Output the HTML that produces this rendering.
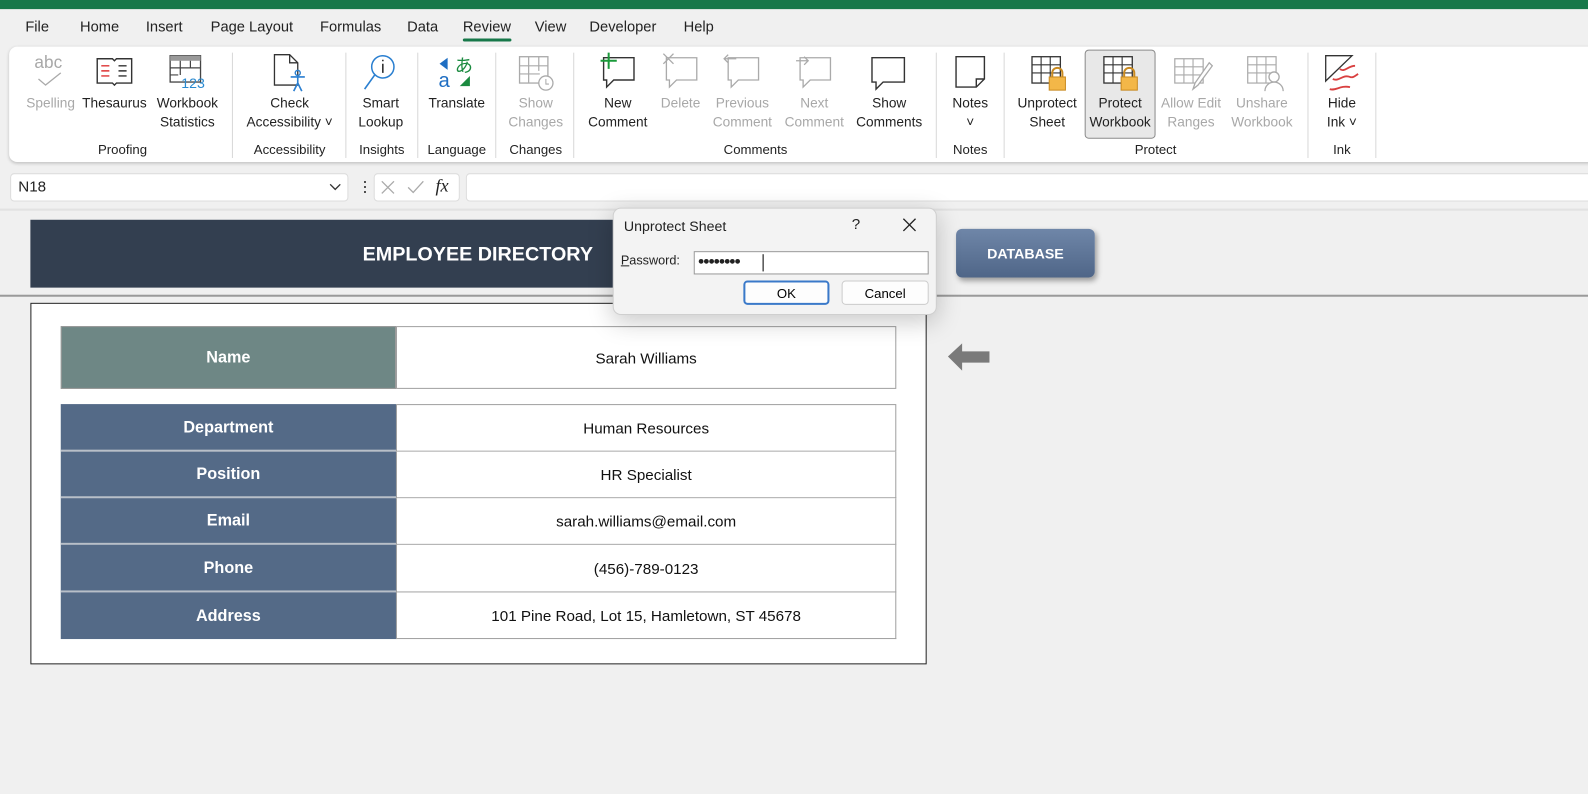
<!DOCTYPE html>
<html><head><meta charset="utf-8"><style>
*{margin:0;padding:0;box-sizing:border-box}
html,body{width:1588px;height:794px;overflow:hidden;background:#f0f0f0;font-family:"Liberation Sans",sans-serif}
#w{position:absolute;left:0;top:0;width:1568px;height:784px;transform:scale(1.01276);transform-origin:0 0;background:#f0f0f0}
.a{position:absolute}
.t{position:absolute;font-size:14.5px;color:#222;white-space:nowrap}
.bl{position:absolute;font-size:13.5px;color:#222;text-align:center;line-height:19px;white-space:nowrap}
.g{color:#a8a8a8}
.gl{position:absolute;top:140px;font-size:13px;color:#222;text-align:center;white-space:nowrap}
.sep{position:absolute;top:52px;width:1px;height:104px;background:#d8d8d8}
svg{position:absolute}
.lab{position:absolute;left:60px;width:331px;color:#fff;font-weight:bold;font-size:16px;display:flex;align-items:center;justify-content:center;background:#546a87;border-bottom:2px solid #b8bfc8;padding-top:2px}
.val{position:absolute;left:391px;width:494px;font-size:15px;color:#111;display:flex;align-items:center;justify-content:center;background:#fff;border:1px solid #a0a0a0;border-top:none;padding-top:2px}
</style></head><body><div id="w">
<div class="a" style="left:0;top:0;width:1568px;height:9px;background:#17784a"></div>
<div class="t" style="left:25px;top:19px">File</div>
<div class="t" style="left:79px;top:19px">Home</div>
<div class="t" style="left:144px;top:19px">Insert</div>
<div class="t" style="left:208px;top:19px">Page Layout</div>
<div class="t" style="left:316px;top:19px">Formulas</div>
<div class="t" style="left:402px;top:19px">Data</div>
<div class="t" style="left:457px;top:19px">Review</div>
<div class="a" style="left:457px;top:38px;width:48px;height:3px;background:#17784a;border-radius:2px"></div>
<div class="t" style="left:528px;top:19px">View</div>
<div class="t" style="left:582px;top:19px">Developer</div>
<div class="t" style="left:675px;top:19px">Help</div>

<div class="a" style="left:9px;top:46px;width:1570px;height:114px;background:#fff;border-radius:8px 0 0 8px;box-shadow:0 1px 3px rgba(0,0,0,.2)"></div>
<div class="sep" style="left:229px"></div><div class="sep" style="left:341px"></div><div class="sep" style="left:412px"></div><div class="sep" style="left:489px"></div><div class="sep" style="left:566px"></div><div class="sep" style="left:924px"></div><div class="sep" style="left:991px"></div><div class="sep" style="left:1291px"></div><div class="sep" style="left:1358px"></div>

<div class="t g" style="left:34px;top:52px;font-size:17px">abc</div>
<svg style="left:36px;top:70px" width="26" height="16"><path d="M2 8 L9 14 L24 2" fill="none" stroke="#aaa" stroke-width="1.3"/></svg>
<svg style="left:94px;top:55px" width="38" height="32"><path d="M2 3h15l2 2 2-2h15v24H21l-2 2-2-2H2z" fill="none" stroke="#333" stroke-width="1.4"/><path d="M6 10h8M6 15h8M6 20h8" stroke="#d33" stroke-width="1.4"/><path d="M23 10h8M23 15h8M23 20h8" stroke="#333" stroke-width="1.4"/></svg>
<svg style="left:167px;top:54px" width="36" height="34"><rect x="1" y="1" width="30" height="26" fill="none" stroke="#444" stroke-width="1.3"/><rect x="1" y="1" width="30" height="5" fill="#999"/><path d="M1 13h30M1 20h8M11 6v14M21 6v7" stroke="#444" stroke-width="1.2"/><text x="12" y="33" font-size="14" fill="#2a8ad0" font-family="Liberation Sans">123</text></svg>
<svg style="left:268px;top:53px" width="40" height="40"><path d="M3 1h15l8 8v22H3z" fill="none" stroke="#333" stroke-width="1.3"/><path d="M18 1v8h8" fill="none" stroke="#333" stroke-width="1.3"/><circle cx="26" cy="19" r="2.5" fill="none" stroke="#2a7fd0" stroke-width="1.4"/><path d="M19 23h14M26 22v7l-4 8M26 29l4 8" fill="none" stroke="#2a7fd0" stroke-width="1.6"/></svg>
<svg style="left:358px;top:52px" width="36" height="40"><circle cx="20" cy="14" r="11" fill="none" stroke="#2a7fd0" stroke-width="1.5"/><path d="M20 11v9M20 7v1.5" stroke="#333" stroke-width="1.6"/><path d="M12 22 L2 36" stroke="#2a7fd0" stroke-width="1.6"/></svg>
<svg style="left:432px;top:53px" width="38" height="36"><path d="M2 10l8-6v12z" fill="#1f6ec2"/><text x="1" y="33" font-size="20" fill="#1f6ec2" font-family="Liberation Sans">a</text><text x="17" y="18" font-size="18" fill="#1a8a3f" font-family="Noto Sans CJK JP,sans-serif">あ</text><path d="M22 32l10-10v10z" fill="#1a8a3f"/></svg>
<svg style="left:512px;top:55px" width="36" height="36"><rect x="1" y="1" width="28" height="26" fill="none" stroke="#aaa" stroke-width="1.3"/><path d="M1 10h28M1 18h20M10 1v26M20 1v14" stroke="#aaa" stroke-width="1.2"/><circle cx="27" cy="27" r="7" fill="#fff" stroke="#aaa" stroke-width="1.3"/><path d="M27 23v5h3" stroke="#aaa" fill="none"/></svg>
<svg style="left:590px;top:50px" width="42" height="42"><path d="M6 7h30v22H16l-7 7v-7H6z" fill="none" stroke="#333" stroke-width="1.4"/><path d="M11 2v16M3 10h16" stroke="#1a9a3a" stroke-width="2"/></svg>
<svg style="left:652px;top:52px" width="40" height="40"><path d="M6 5h30v22H16l-7 7v-7H6z" fill="none" stroke="#aaa" stroke-width="1.3"/><path d="M3 1l10 10M13 1L3 11" stroke="#aaa" stroke-width="1.3"/></svg>
<svg style="left:713px;top:52px" width="40" height="40"><path d="M6 5h30v22H16l-7 7v-7H6z" fill="none" stroke="#aaa" stroke-width="1.3"/><path d="M14 6H2M6 2L2 6l4 4" fill="none" stroke="#aaa" stroke-width="1.3"/></svg>
<svg style="left:784px;top:52px" width="40" height="40"><path d="M6 5h30v22H16l-7 7v-7H6z" fill="none" stroke="#aaa" stroke-width="1.3"/><path d="M2 8h12M10 4l4 4-4 4" fill="none" stroke="#aaa" stroke-width="1.3"/></svg>
<svg style="left:858px;top:54px" width="40" height="40"><path d="M3 3h32v24H14l-7 7v-7H3z" fill="none" stroke="#333" stroke-width="1.4"/></svg>
<svg style="left:942px;top:54px" width="34" height="36"><path d="M2 2h28v22l-8 8H2z M22 32v-8h8" fill="none" stroke="#333" stroke-width="1.4"/></svg>
<svg style="left:1017px;top:54px" width="40" height="38"><rect x="2" y="2" width="28" height="26" fill="#fff" stroke="#333" stroke-width="1.3"/><path d="M2 10h28M2 18h28M11 2v26M20 2v26" stroke="#333" stroke-width="1.1"/><path d="M22 22v-4a5 5 0 0 1 10 0v4" fill="none" stroke="#c98a20" stroke-width="2"/><rect x="19" y="22" width="16" height="13" fill="#f3b748" stroke="#c98a20"/></svg>
<div class="a" style="left:1071px;top:49px;width:70px;height:88px;background:#e8e8e8;border:1px solid #8a8a8a;border-radius:4px"></div>
<svg style="left:1088px;top:54px" width="40" height="38"><rect x="2" y="2" width="28" height="26" fill="#fff" stroke="#333" stroke-width="1.3"/><path d="M2 10h28M2 18h28M11 2v26M20 2v26" stroke="#333" stroke-width="1.1"/><path d="M22 22v-4a5 5 0 0 1 10 0v4" fill="none" stroke="#c98a20" stroke-width="2"/><rect x="19" y="22" width="16" height="13" fill="#f3b748" stroke="#c98a20"/></svg>
<svg style="left:1158px;top:56px" width="40" height="36"><rect x="2" y="2" width="28" height="24" fill="none" stroke="#aaa" stroke-width="1.2"/><path d="M2 10h28M2 18h28M11 2v24M20 2v24" stroke="#aaa" stroke-width="1.1"/><path d="M36 6L22 26l-2 6 5-4L39 9z" fill="#fff" stroke="#aaa" stroke-width="1.3"/></svg>
<svg style="left:1230px;top:54px" width="40" height="38"><rect x="2" y="2" width="28" height="26" fill="none" stroke="#aaa" stroke-width="1.2"/><path d="M2 10h28M2 18h28M11 2v26M20 2v26" stroke="#aaa" stroke-width="1.1"/><circle cx="28" cy="22" r="5" fill="#fff" stroke="#aaa" stroke-width="1.3"/><path d="M19 36a9 9 0 0 1 18 0" fill="#fff" stroke="#aaa" stroke-width="1.3"/></svg>
<svg style="left:1307px;top:52px" width="38" height="38"><path d="M2 28V3h26z" fill="none" stroke="#333" stroke-width="1.3"/><path d="M16 16c4 4 8-3 15-3M9 26c6 3 10-5 17-2 3 1 5-1 8-3" fill="none" stroke="#d94040" stroke-width="1.8"/><path d="M6 36c6 2 10-4 20-2" fill="none" stroke="#d94040" stroke-width="1.8"/></svg>

<div class="bl g" style="left:18px;top:92px;width:64px">Spelling</div>
<div class="bl" style="left:80px;top:92px;width:66px">Thesaurus</div>
<div class="bl" style="left:148px;top:92px;width:74px">Workbook<br>Statistics</div>
<div class="bl" style="left:236px;top:92px;width:100px">Check<br>Accessibility ˅</div>
<div class="bl" style="left:346px;top:92px;width:60px">Smart<br>Lookup</div>
<div class="bl" style="left:418px;top:92px;width:66px">Translate</div>
<div class="bl g" style="left:494px;top:92px;width:70px">Show<br>Changes</div>
<div class="bl" style="left:574px;top:92px;width:72px">New<br>Comment</div>
<div class="bl g" style="left:644px;top:92px;width:56px">Delete</div>
<div class="bl g" style="left:698px;top:92px;width:70px">Previous<br>Comment</div>
<div class="bl g" style="left:768px;top:92px;width:72px">Next<br>Comment</div>
<div class="bl" style="left:838px;top:92px;width:80px">Show<br>Comments</div>
<div class="bl" style="left:930px;top:92px;width:56px">Notes<br>˅</div>
<div class="bl" style="left:996px;top:92px;width:76px">Unprotect<br>Sheet</div>
<div class="bl" style="left:1068px;top:92px;width:76px">Protect<br>Workbook</div>
<div class="bl g" style="left:1138px;top:92px;width:76px">Allow Edit<br>Ranges</div>
<div class="bl g" style="left:1208px;top:92px;width:76px">Unshare<br>Workbook</div>
<div class="bl" style="left:1296px;top:92px;width:58px">Hide<br>Ink ˅</div>
<div class="gl" style="left:80px;width:82px">Proofing</div>
<div class="gl" style="left:236px;width:100px">Accessibility</div>
<div class="gl" style="left:346px;width:62px">Insights</div>
<div class="gl" style="left:416px;width:70px">Language</div>
<div class="gl" style="left:494px;width:70px">Changes</div>
<div class="gl" style="left:700px;width:92px">Comments</div>
<div class="gl" style="left:930px;width:56px">Notes</div>
<div class="gl" style="left:1100px;width:82px">Protect</div>
<div class="gl" style="left:1296px;width:58px">Ink</div>

<div class="a" style="left:10px;top:171px;width:334px;height:28px;background:#fff;border:1px solid #ddd;border-radius:4px"></div>
<div class="t" style="left:18px;top:176px;font-size:15px">N18</div>
<svg style="left:325px;top:181px" width="12" height="8"><path d="M1 1l5 5 5-5" fill="none" stroke="#333" stroke-width="1.3"/></svg>
<div class="t" style="left:353px;top:175px;font-size:15px">⋮</div>
<div class="a" style="left:369px;top:171px;width:85px;height:28px;background:#fff;border:1px solid #ddd;border-radius:4px"></div>
<svg style="left:375px;top:177px" width="50" height="16"><path d="M2 2l12 12M14 2L2 14M28 8l5 5 10-11" fill="none" stroke="#aaa" stroke-width="1.3"/></svg>
<div class="t" style="left:430px;top:173px;font-size:18px;font-style:italic;font-family:'Liberation Serif',serif">fx</div>
<div class="a" style="left:460px;top:171px;width:1110px;height:28px;background:#fff;border:1px solid #ddd;border-radius:4px 0 0 4px"></div>
<div class="a" style="left:0;top:206px;width:1568px;height:2px;background:#e2e2e2"></div>

<div class="a" style="left:30px;top:217px;width:600px;height:67px;background:#333f50"></div>
<div class="t" style="left:358px;top:240px;color:#fff;font-weight:bold;font-size:19.5px">EMPLOYEE DIRECTORY</div>
<div class="a" style="left:0;top:291px;width:1568px;height:1.5px;background:#9a9a9a"></div>
<div class="a" style="left:944px;top:226px;width:137px;height:48px;border-radius:6px;background:linear-gradient(#6f86a8,#4f6688);box-shadow:2px 3px 5px rgba(0,0,0,.35);color:#fff;font-weight:bold;font-size:14px;display:flex;align-items:center;justify-content:center">DATABASE</div>
<svg style="left:935px;top:338px" width="44" height="30"><path d="M1 14L15 1v8h27v11H15v8z" fill="#7a7a7a"/></svg>

<div class="a" style="left:30px;top:299px;width:885px;height:357px;background:#fff;border:1.5px solid #222"></div>
<div class="lab" style="top:322px;height:62px;background:#6e8785;border:1px solid #999">Name</div>
<div class="val" style="top:322px;height:62px;border-top:1px solid #a0a0a0">Sarah Williams</div>
<div class="lab" style="top:399px;height:47px">Department</div><div class="val" style="top:399px;height:47px;border-top:1px solid #a0a0a0">Human Resources</div>
<div class="lab" style="top:446px;height:46px">Position</div><div class="val" style="top:446px;height:46px">HR Specialist</div>
<div class="lab" style="top:492px;height:46px">Email</div><div class="val" style="top:492px;height:46px">sarah.williams@email.com</div>
<div class="lab" style="top:538px;height:47px">Phone</div><div class="val" style="top:538px;height:47px">(456)-789-0123</div>
<div class="lab" style="top:585px;height:46px;border-bottom:none">Address</div><div class="val" style="top:585px;height:46px">101 Pine Road, Lot 15, Hamletown, ST 45678</div>

<div class="a" style="left:605px;top:205px;width:320px;height:106px;background:#f3f3f3;border:1px solid #cfcfcf;border-radius:8px;box-shadow:0 6px 24px rgba(0,0,0,.22)"></div>
<div class="t" style="left:616px;top:215px;font-size:14px">Unprotect Sheet</div>
<div class="t" style="left:841px;top:213px;font-size:15px">?</div>
<svg style="left:891px;top:215px" width="14" height="14"><path d="M1 1l12 12M13 1L1 13" stroke="#222" stroke-width="1.3"/></svg>
<div class="t" style="left:613px;top:250px;font-size:12.5px"><u>P</u>assword:</div>
<div class="a" style="left:685px;top:248px;width:232px;height:23px;background:#fff;border:1px solid #999"></div>
<div class="t" style="left:689px;top:252px;font-size:11px;letter-spacing:-1.5px">●●●●●●●●</div>
<div class="a" style="left:753px;top:251px;width:1px;height:17px;background:#000"></div>
<div class="a" style="left:734px;top:277px;width:85px;height:24px;background:#fdfdfd;border:2px solid #3a79c9;border-radius:4px;font-size:13px;display:flex;align-items:center;justify-content:center">OK</div>
<div class="a" style="left:831px;top:277px;width:86px;height:24px;background:#fdfdfd;border:1px solid #ccc;border-radius:4px;font-size:13px;display:flex;align-items:center;justify-content:center">Cancel</div>
</div></body></html>
